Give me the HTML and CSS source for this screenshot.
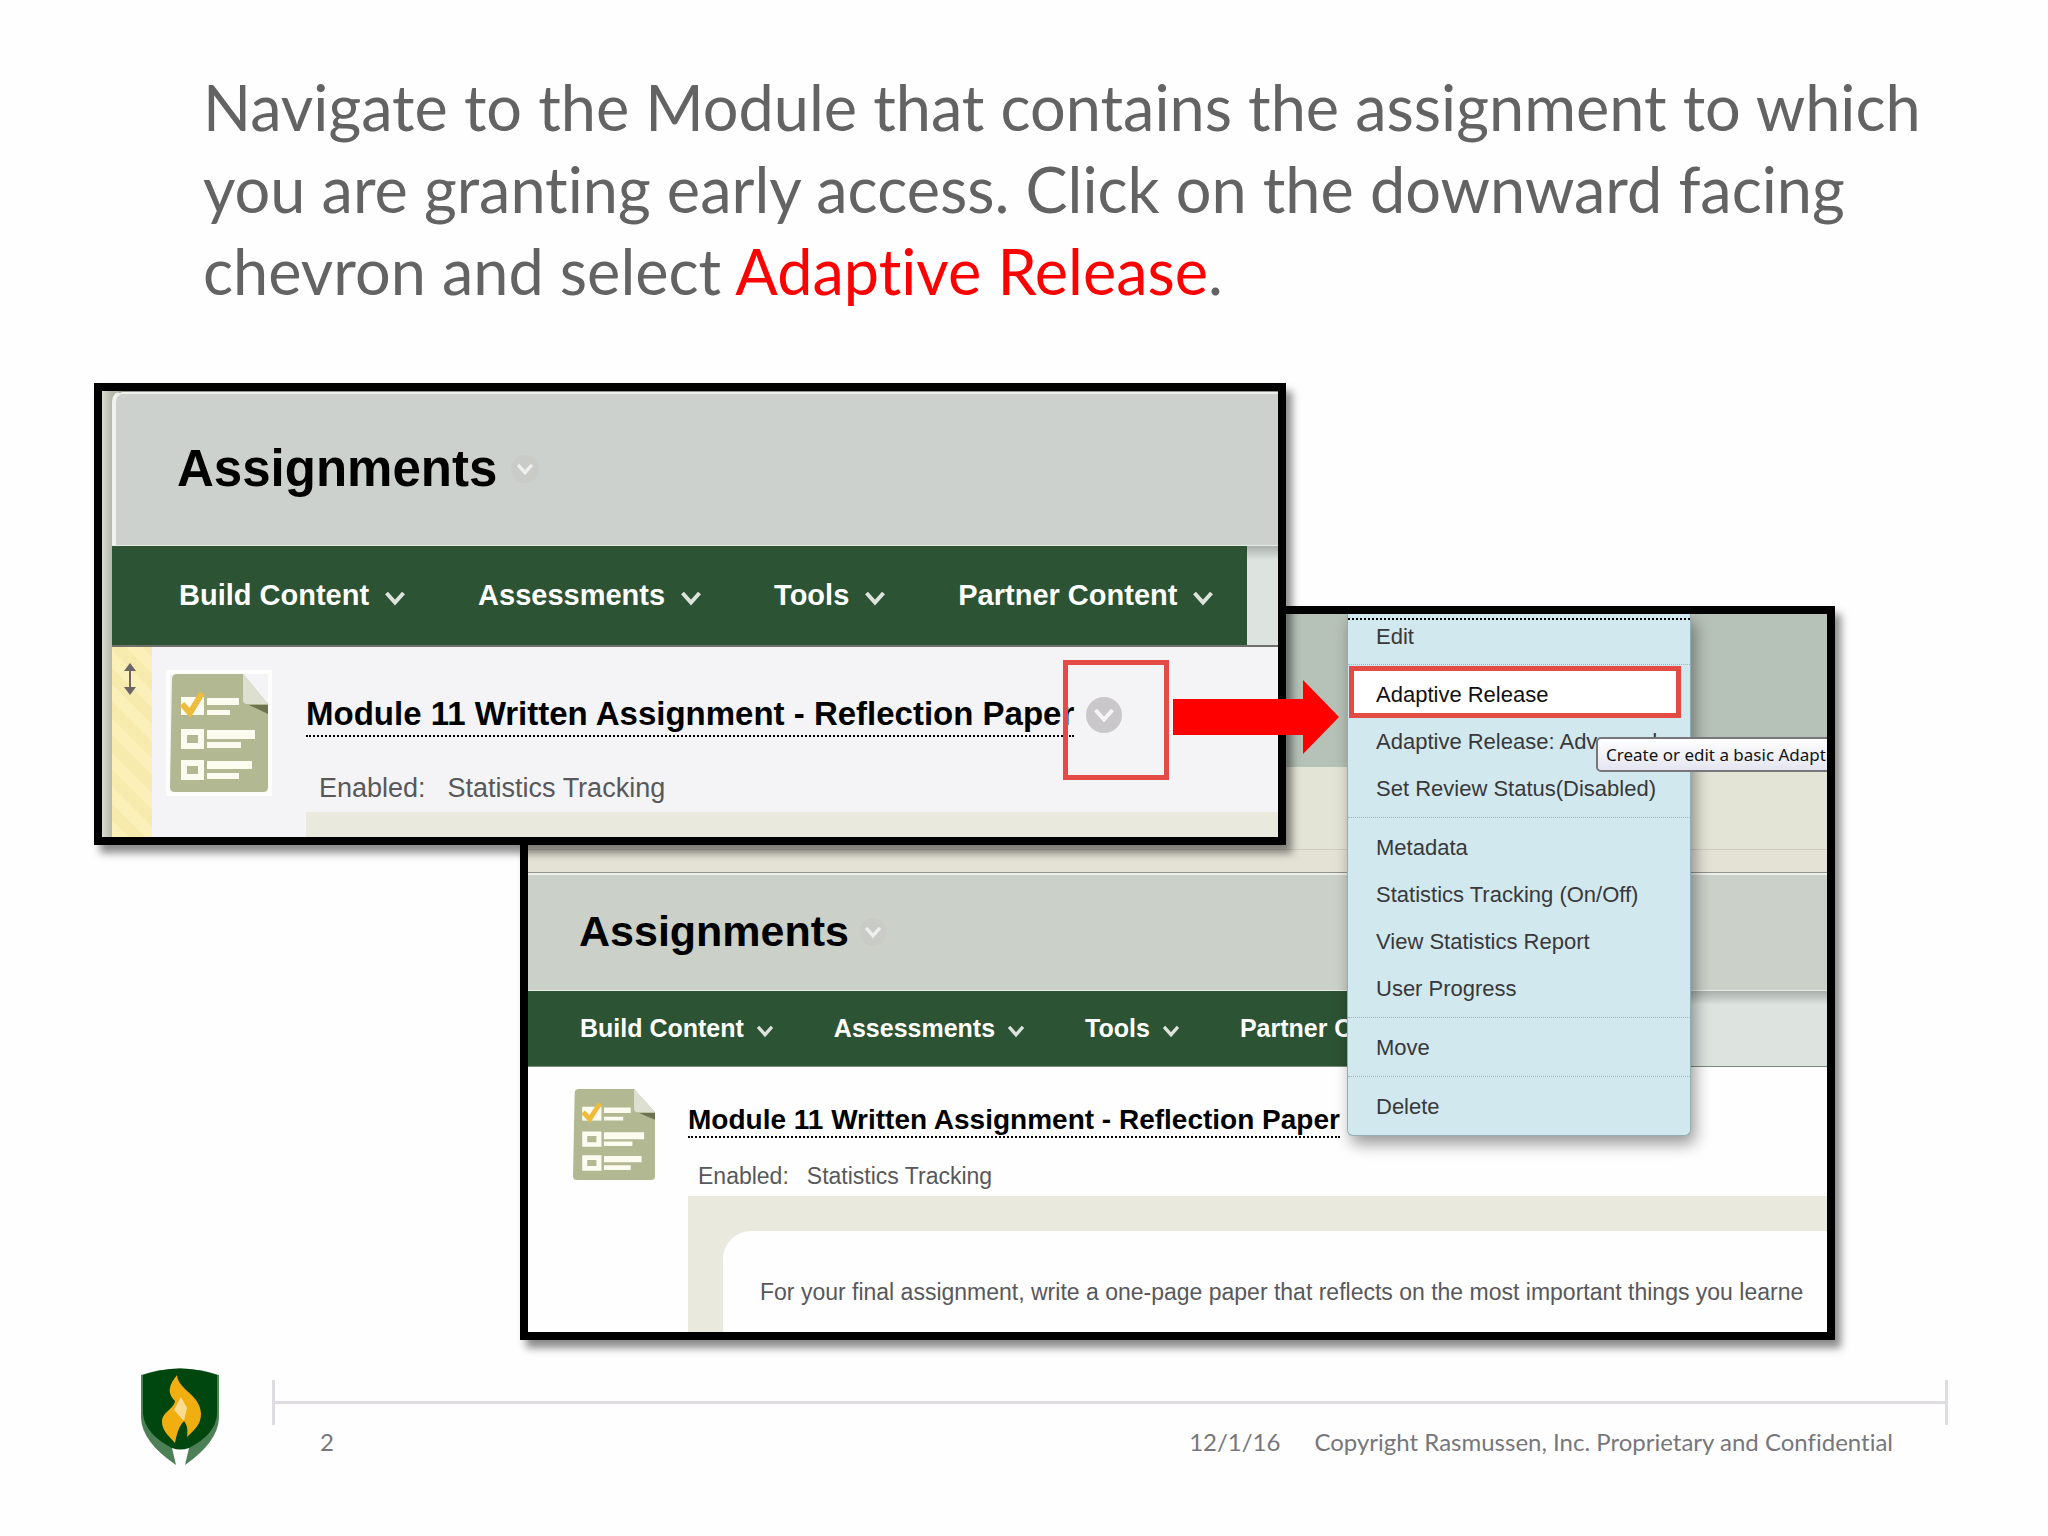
FILE: index.html
```html
<!DOCTYPE html>
<html lang="en">
<head>
    <meta charset="UTF-8">
    <meta name="viewport" content="width=device-width, initial-scale=1.0">
    <title>Adaptive Release</title>
    <link rel="stylesheet" href="styles.css">
</head>
<body>
    <!-- shared icons -->
    <svg class="sprite" aria-hidden="true">
        <symbol id="chevron" viewBox="0 0 22 16">
            <path d="M2.5 3 L11 12.5 L19.5 3" fill="none" stroke="currentColor" stroke-width="4"/>
        </symbol>
        <symbol id="checklist" viewBox="0 0 98 118" preserveAspectRatio="none">
            <path d="M7 0H73L98 30V113Q98 118 93 118H5Q0 118 0 113L2 5Q2 0 7 0Z" fill="#b2b992"/>
            <path d="M73 0L98 30H77Q73 30 73 26Z" fill="#dde0d0"/>
            <path d="M79 31H98V40Z" fill="#6c7150"/>
            <g fill="#fbfbf0">
                <path d="M11 23H34V41H11Z"/>
                <path d="M37 24H69V31H37ZM37 36H60V41H37Z"/>
                <path d="M37 56H85V65H37ZM37 68H71V74H37Z"/>
                <path d="M37 87H82V95H37ZM37 99H69V105H37Z"/>
            </g>
            <path d="M14 58H31V72H14ZM14 89H31V103H14Z" fill="none" stroke="#fbfbf0" stroke-width="6"/>
            <path d="M12 30L20 39L32 19" fill="none" stroke="#eebb3c" stroke-width="6"/>
        </symbol>
    </svg>

    <main class="slide">
        <h1 class="slide-title">Navigate to the Module that contains the assignment to which you are granting early access. Click on the downward facing chevron and select <span class="highlight">Adaptive Release</span>.</h1>

        <div class="stage">
            <section class="window window-back">
                <div class="banner"></div>
                <div class="crumbs"></div>
                <header class="page-header">
                    <h2>Assignments</h2>
                    <span class="heading-chevron"><svg><use href="#chevron"/></svg></span>
                </header>
                <nav class="action-bar">
                    <div class="actions">
                        <button>Build Content <svg><use href="#chevron"/></svg></button>
                        <button>Assessments <svg><use href="#chevron"/></svg></button>
                        <button>Tools <svg><use href="#chevron"/></svg></button>
                        <button>Partner Content <svg><use href="#chevron"/></svg></button>
                    </div>
                </nav>
                <article class="item">
                    <svg class="item-icon"><use href="#checklist"/></svg>
                    <div class="item-body">
                        <a class="item-link" href="#">Module 11 Written Assignment - Reflection Paper</a>
                        <p class="enabled"><span>Enabled:</span><span>Statistics Tracking</span></p>
                        <div class="details">
                            <p class="details-card">For your final assignment, write a one-page paper that reflects on the most important things you learne</p>
                        </div>
                    </div>
                </article>

                <div class="menu">
                    <div class="menu-group">
                        <button>Edit</button>
                    </div>
                    <div class="menu-group">
                        <button class="selected">Adaptive Release</button>
                        <button>Adaptive Release: Advanced</button>
                        <button>Set Review Status(Disabled)</button>
                    </div>
                    <div class="menu-group">
                        <button>Metadata</button>
                        <button>Statistics Tracking (On/Off)</button>
                        <button>View Statistics Report</button>
                        <button>User Progress</button>
                    </div>
                    <div class="menu-group">
                        <button>Move</button>
                    </div>
                    <div class="menu-group">
                        <button>Delete</button>
                    </div>
                </div>
                <div class="tooltip">Create or edit a basic Adapt</div>
            </section>

            <div class="front">
                <section class="window window-front">
                    <header class="page-header">
                        <h2>Assignments</h2>
                        <span class="heading-chevron"><svg><use href="#chevron"/></svg></span>
                    </header>
                    <nav class="action-bar">
                        <div class="actions">
                            <button>Build Content <svg><use href="#chevron"/></svg></button>
                            <button>Assessments <svg><use href="#chevron"/></svg></button>
                            <button>Tools <svg><use href="#chevron"/></svg></button>
                            <button>Partner Content <svg><use href="#chevron"/></svg></button>
                        </div>
                    </nav>
                    <article class="item">
                        <div class="drag-handle">
                            <svg viewBox="0 0 12 32"><path d="M6 0L12 8H7V24H12L6 32L0 24H5V8H0Z" fill="#6b6468"/></svg>
                        </div>
                        <svg class="item-icon"><use href="#checklist"/></svg>
                        <div class="item-body">
                            <div class="item-heading">
                                <a class="item-link" href="#">Module 11 Written Assignment - Reflection Paper</a>
                                <button class="item-chevron" aria-label="Item options"><svg><use href="#chevron"/></svg></button>
                            </div>
                            <p class="enabled"><span>Enabled:</span><span>Statistics Tracking</span></p>
                            <div class="details"></div>
                        </div>
                    </article>
                    <div class="callout"></div>
                </section>
                <svg class="arrow" viewBox="0 0 166 74"><path d="M0 19H130V0L166 37L130 74V55H0Z" fill="#fe0000"/></svg>
            </div>
        </div>

        <footer class="slide-footer">
            <svg class="logo" viewBox="0 0 80 98">
                <path d="M1 7Q40 -6 79 7V50Q78 74 45 97L49 80H32L36 97Q2 74 1 50Z" fill="#4e8058"/>
                <path d="M3 7Q40 -6 77 7V46Q76 66 49 80Q40 83 32 80Q5 66 3 46Z" fill="#00460f"/>
                <path d="M37 7C38 22 61 27 61 46C61 57 54 62 47 69C48 61 47 57 44 53C39 58 37 65 35 75C30 69 22 63 22 54C22 44 34 41 35 33C26 24 30 16 37 7Z" fill="#f0ae11"/>
                <path d="M41 29L47 40L44 53L34 42Z" fill="#f8dc91"/>
            </svg>
            <div class="footer-main">
                <div class="rule"></div>
                <div class="footer-text">
                    <span class="page-number">2</span>
                    <span>12/1/16</span>
                    <span>Copyright Rasmussen, Inc. Proprietary and Confidential</span>
                </div>
            </div>
        </footer>
    </main>
</body>
</html>
```
FILE: styles.css
```css
* {
    box-sizing: border-box;
}
body {
    margin: 0;
    background: #fefefe;
    font-family: "Liberation Sans", Arial, sans-serif;
}
h1, h2, p {
    margin: 0;
}
button {
    padding: 0;
    border: 0;
    background: none;
    font: inherit;
    color: inherit;
    cursor: pointer;
}
.sprite {
    position: absolute;
    width: 0;
    height: 0;
}

/* slide text */
.slide-title {
    padding: 66px 90px 71px 203px;
    font-family: Lato, sans-serif;
    font-size: 63px;
    font-weight: 400;
    font-variant-ligatures: none;
    line-height: 82px;
    color: #636363;
}
.highlight {
    color: #fe0000;
}

/* the two overlapping windows */
.stage {
    display: grid;
    grid-template-columns: 94fr 426fr 766fr 549fr 213fr;
    align-items: start;
}
.window {
    position: relative;
    overflow: hidden;
    border: 8px solid #000;
    background: #fefefe;
    box-shadow: 6px 8px 8px rgba(0, 0, 0, 0.45);
}
.window-back {
    grid-area: 1 / 3 / 2 / 5;
    margin-top: 223px;
}
.front {
    position: relative;
    grid-area: 1 / 2 / 2 / 4;
}
.banner {
    height: 153px;
    background: #b6c1b7;
}
.crumbs {
    height: 105px;
    border-bottom: 22px solid #e4e1d5;
    background: #e4e4d6;
    box-shadow: inset 0 -1px #cfcdbf;
}

.page-header {
    display: flex;
    align-items: center;
    gap: 10px;
    height: 119px;
    padding-left: 51px;
    border-top: 1px solid #8f938c;
    border-bottom: 1px solid #e6ebe6;
    background: #cbd1c9;
    box-shadow: inset 0 2px #eef0ec;
}
.page-header h2 {
    font-size: 43px;
}
.heading-chevron {
    display: flex;
    align-items: center;
    justify-content: center;
    width: 28px;
    height: 28px;
    border-radius: 50%;
    background: #c9cbc7;
    color: #eeefee;
}
.heading-chevron svg {
    width: 18px;
    height: 14px;
}

.action-bar {
    height: 76px;
    border-bottom: 1px solid #7c8a7f;
    background: linear-gradient(#a9afab, #dde4e0 14px);
}
.actions {
    display: flex;
    gap: 60px;
    width: 960px;
    height: 100%;
    padding-left: 52px;
    background: #2c5333;
    font-size: 25px;
    font-weight: bold;
    color: #fff;
    white-space: nowrap;
}
.actions button {
    display: flex;
    align-items: center;
    gap: 12px;
}
.actions svg {
    width: 18px;
    height: 14px;
    margin-top: 4px;
    color: #dde3dc;
}

.item {
    display: flex;
    align-items: flex-start;
}
.item-icon {
    flex: none;
    width: 82px;
    height: 91px;
    margin: 22px 33px 0 45px;
}
.item-body {
    flex: 1;
    min-width: 0;
    padding-top: 36px;
}
.item-link {
    display: inline-block;
    border-bottom: 2px dotted #000;
    font-size: 28px;
    font-weight: bold;
    line-height: 33px;
    color: #000;
    text-decoration: none;
    white-space: nowrap;
}
.enabled {
    display: flex;
    gap: 18px;
    padding: 24px 0 6px 10px;
    font-size: 23px;
    line-height: 28px;
    color: #58585a;
}
.details {
    padding: 35px 0 0 35px;
    background: #e9e9de;
}
.details-card {
    overflow: hidden;
    padding: 45px 0 24px 37px;
    border-top-left-radius: 28px;
    background: #fefefe;
    font-size: 23px;
    line-height: 32px;
    color: #58585a;
    white-space: nowrap;
}

/* larger copy of the same page in the front window */
.window-front {
    padding-left: 10px;
    background: linear-gradient(90deg, #d9dccf, #b4b8ab 10px);
}
.window-front .page-header {
    gap: 14px;
    height: 155px;
    padding-left: 61px;
    border-left: 4px solid #f0f2ef;
    border-top-left-radius: 10px;
    background: #ccd1cd;
}
.window-front .page-header h2 {
    font-size: 51px;
}
.window-front .action-bar {
    height: 101px;
    border-bottom: 2px solid #6f6f6b;
}
.window-front .actions {
    gap: 72px;
    width: auto;
    margin-right: 31px;
    padding-left: 67px;
    font-size: 29px;
}
.window-front .actions button {
    gap: 15px;
}
.window-front .actions svg {
    width: 22px;
    height: 16px;
}
.window-front .item {
    align-items: stretch;
    background: #f4f4f6;
}
.drag-handle {
    width: 40px;
    padding: 16px 0 0 12px;
    background: repeating-linear-gradient(45deg, #faf0b8 0 12px, #f6eaad 12px 24px);
}
.drag-handle svg {
    display: block;
    width: 12px;
    height: 32px;
}
.window-front .item-icon {
    width: 98px;
    height: 118px;
    margin: 27px 38px 0 18px;
    outline: 4px solid #fdfdfb;
}
.window-front .item-body {
    padding-top: 46px;
}
.item-heading {
    display: flex;
    align-items: center;
    gap: 12px;
}
.window-front .item-link {
    font-size: 33px;
    line-height: 42px;
}
.item-chevron {
    display: flex;
    align-items: center;
    justify-content: center;
    width: 36px;
    height: 36px;
    border-radius: 50%;
    background: #c9c7c9;
    color: #f4f4f6;
}
.item-chevron svg {
    width: 22px;
    height: 16px;
}
.window-front .enabled {
    gap: 22px;
    padding: 35px 0 8px 13px;
    font-size: 27px;
    line-height: 32px;
}
.window-front .details {
    height: 25px;
    padding: 0;
}
.callout {
    position: absolute;
    top: 269px;
    right: 109px;
    width: 106px;
    height: 120px;
    border: 5px solid #e54b45;
}
.arrow {
    position: absolute;
    top: 297px;
    right: -53px;
    width: 166px;
    height: 74px;
}

/* context menu */
.menu {
    position: absolute;
    top: 0;
    left: 819px;
    width: 344px;
    border: 1px solid #93adb4;
    border-top: 0;
    border-radius: 0 0 6px 6px;
    background: #d2e8ef;
    box-shadow: 4px 8px 16px rgba(0, 0, 0, 0.4);
    font-size: 22px;
    line-height: 47px;
    color: #38383a;
}
.menu-group {
    padding: 6px 0 5px;
    border-bottom: 1px dotted #9fb5bb;
}
.menu-group:first-child {
    padding-top: 0;
}
.menu-group:first-child::before {
    content: "";
    position: absolute;
    top: 4px;
    left: 0;
    right: 0;
    border-top: 2px dotted #000;
}
.menu-group:last-child {
    border-bottom: 0;
}
.menu button {
    display: block;
    width: 100%;
    padding-left: 28px;
    text-align: left;
}
.menu-group:first-child button {
    height: 45px;
    line-height: 38px;
}
.menu .selected {
    position: relative;
    color: #111;
    z-index: 0;
}
.menu .selected::before {
    content: "";
    position: absolute;
    inset: -5px 9px 0 1px;
    border: 5px solid #e54b45;
    background: #fff;
    z-index: -1;
}
.tooltip {
    position: absolute;
    top: 123px;
    left: 1068px;
    padding: 0 12px 0 8px;
    border: 2px solid #77777b;
    border-radius: 5px;
    background: linear-gradient(#fff, #e4e5f0);
    font-family: "Noto Sans", sans-serif;
    font-size: 17px;
    line-height: 31px;
    color: #111;
    white-space: nowrap;
}

/* footer */
.slide-footer {
    display: flex;
    gap: 52px;
    padding: 28px 100px 0 140px;
    font-family: Lato, sans-serif;
    font-size: 24px;
    font-variant-ligatures: none;
    line-height: 28px;
    color: #77777b;
}
.logo {
    flex: none;
    width: 80px;
    height: 98px;
}
.footer-main {
    flex: 1;
    padding-top: 12px;
}
.rule {
    height: 45px;
    border: solid #dedce0;
    border-width: 0 3px;
    background: linear-gradient(#dedce0, #dedce0) center / 100% 3px no-repeat;
}
.footer-text {
    display: flex;
    gap: 34px;
    padding: 3px 55px 0 48px;
}
.page-number {
    flex: 1;
}
```
